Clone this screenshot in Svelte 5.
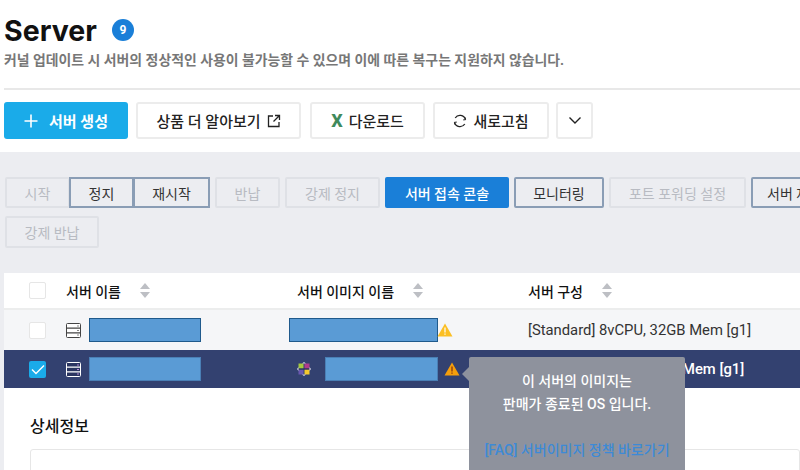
<script lang="ts">
    const actions = [
        { label: '시작', w: 65, kind: 'off' },
        { label: '정지', w: 65, kind: 'on', join: true },
        { label: '재시작', w: 77, kind: 'on', join: true },
        { label: '반납', w: 65, kind: 'off', gap: true },
        { label: '강제 정지', w: 95, kind: 'off', gap: true },
        { label: '서버 접속 콘솔', w: 124, kind: 'main', gap: true },
        { label: '모니터링', w: 90, kind: 'on', gap: true },
        { label: '포트 포워딩 설정', w: 137, kind: 'off', gap: true },
        { label: '서버 재설치', w: 100, kind: 'on', gap: true },
        { label: '강제 반납', w: 94, kind: 'off' }
    ];
</script>

<div class="page">
    <header>
        <div class="title-row">
            <h1>Server</h1>
            <span class="badge">9</span>
        </div>
        <p class="notice">커널 업데이트 시 서버의 정상적인 사용이 불가능할 수 있으며 이에 따른 복구는 지원하지 않습니다.</p>
        <div class="toolbar">
            <button class="create">
                <svg class="plus" width="14" height="14" viewBox="0 0 14 14" stroke="#fff" stroke-width="1.6">
                    <path d="M7 0.500v13M0.500 7h13" />
                </svg>
                서버 생성
            </button>
            <button class="tool learn">
                상품 더 알아보기
                <svg width="14" height="14" viewBox="0 0 14 14" fill="none" stroke="#222" stroke-width="1.3">
                    <path d="M6 2H1.500v10.500H12V8" />
                    <path d="M8 1.500h4.500V6M12.500 1.500L6.500 7.500" />
                </svg>
            </button>
            <button class="tool download"><span class="xls">X</span>다운로드</button>
            <button class="tool refresh">
                <svg width="14" height="14" viewBox="0 0 14 14" fill="none" stroke="#222" stroke-width="1.3">
                    <path d="M12.500 5.500A5.700 5.700 0 0 0 2.200 4" />
                    <path d="M1.500 8.500A5.700 5.700 0 0 0 11.800 10" />
                    <path d="M11.800 3.200l.8 2.500-2.400.2M2.200 10.800l-.8-2.500 2.400-.2" stroke-width="1" />
                </svg>
                새로고침
            </button>
            <button class="tool more" aria-label="더보기">
                <svg width="14" height="9" viewBox="0 0 14 9" fill="none" stroke="#222" stroke-width="1.4">
                    <path d="M1.500 1.500L7 7l5.500-5.500" />
                </svg>
            </button>
        </div>
    </header>

    <section class="content">
        <div class="actions">
            {#each actions as a}
                <button class="act {a.kind}" class:join={a.join} class:gap={a.gap} style="width:{a.w}px">{a.label}</button>
            {/each}
        </div>

        <div class="table">
            <div class="row head">
                <span class="check"><i class="box"></i></span>
                <span class="cell">서버 이름<i class="sort"></i></span>
                <span class="cell">서버 이미지 이름<i class="sort"></i></span>
                <span class="cell">서버 구성<i class="sort"></i></span>
            </div>
            <div class="row plain">
                <span class="check"><i class="box"></i></span>
                <span class="cell">
                    <svg class="srv" width="15" height="15" viewBox="0 0 15 15" fill="#fff" stroke="#444" stroke-width="1">
                        <rect x=".5" y=".5" width="14" height="14" rx="1" />
                        <path d="M1 5.200h13M1 9.800h13" stroke-width="1.200" />
                        <path d="M11 3h2M11 7.500h2M11 12h2" stroke="#888" />
                    </svg>
                    <i class="mask"></i>
                </span>
                <span class="cell img-cell">
                    <i class="mask wide"></i>
                    <svg class="warn" width="16" height="14" viewBox="0 0 16 14">
                        <path d="M8 .5L15.500 13.500H.5z" fill="#fbbf24" />
                        <path d="M7.400 4.500h1.200v5H7.400zM7.400 10.500h1.200v1.300H7.400z" fill="#fff" />
                    </svg>
                </span>
                <span class="cell config">[Standard] 8vCPU, 32GB Mem [g1]</span>
            </div>
            <div class="row selected">
                <span class="check">
                    <i class="box on">
                        <svg width="14" height="11" viewBox="0 0 14 11" fill="none" stroke="#fff" stroke-width="1.400"><path d="M1 5.500l4 4 8-8" /></svg>
                    </i>
                </span>
                <span class="cell">
                    <svg class="srv" width="15" height="15" viewBox="0 0 15 15" fill="#2a3560" stroke="#fff" stroke-width="1">
                        <rect x=".5" y=".5" width="14" height="14" rx="1" />
                        <path d="M1 5.200h13M1 9.800h13" stroke-width="1.200" />
                        <path d="M11 3h2M11 7.500h2M11 12h2" stroke="#b98ad8" />
                    </svg>
                    <i class="mask dim"></i>
                </span>
                <span class="cell img-cell">
                    <svg class="os" width="14" height="14" viewBox="0 0 14 14">
                        <path d="M1.500 1.500H6.500V6.500H1.500z" fill="#a5c93f" />
                        <path d="M7.500 1.500H12.500V6.500H7.500z" fill="#b03c8a" />
                        <path d="M7.500 7.500H12.500V12.500H7.500z" fill="#f5c92f" />
                        <path d="M1.500 7.500H6.500V12.500H1.500z" fill="#6a58b0" />
                        <path d="M7 0l2 1.500H5zM14 7l-1.500 2V5zM7 14l-2-1.500h4zM0 7l1.500-2v4z" fill="#d8d8e4" />
                        <path d="M2 7h10" stroke="#1b2450" stroke-width=".8" />
                    </svg>
                    <i class="mask dim short"></i>
                    <svg class="warn" width="16" height="14" viewBox="0 0 16 14">
                        <path d="M8 .5L15.500 13.500H.5z" fill="#f59e0b" />
                        <path d="M7.400 4.500h1.200v5H7.400zM7.400 10.500h1.200v1.300H7.400z" fill="#7c2d12" />
                    </svg>
                </span>
                <span class="cell config spec">[Standard] 8vCPU, 32GB Mem [g1]</span>
            </div>
            <div class="detail">
                <h2>상세정보</h2>
                <div class="detail-box"></div>
            </div>

            <div class="tip">
                <p>이 서버의 이미지는<br />판매가 종료된 OS 입니다.</p>
                <span class="faq">[FAQ] 서버이미지 정책 바로가기</span>
            </div>
        </div>
    </section>
</div>

<style>
    :global(body) {
        margin: 0;
    }

    .page {
        width: 800px;
        height: 470px;
        overflow: hidden;
        font-family: Roboto, "Noto Sans CJK KR", sans-serif;
        background: #ecedf1;
        color: #222;
    }

    header {
        background: #fff;
        height: 152px;
        box-sizing: border-box;
        padding: 13px 0 0 4px;
    }

    .title-row {
        display: flex;
        align-items: center;
        gap: 15px;
        height: 34px;
    }

    h1 {
        margin: 0;
        font-family: Inter, sans-serif;
        font-size: 28.5px;
        font-weight: 700;
        color: #111;
    }

    .badge {
        width: 22px;
        height: 22px;
        border-radius: 50%;
        background: #1a7fd8;
        color: #fff;
        font-size: 12px;
        font-weight: 700;
        display: flex;
        align-items: center;
        justify-content: center;
    }

    .notice {
        margin: 4px 0 0;
        font-size: 13.9px;
        font-weight: 700;
        line-height: 18px;
        color: #777;
        height: 21px;
    }

    .toolbar {
        margin-top: 16px;
        padding-top: 12px;
        border-top: 2px solid #e8e8e8;
        display: flex;
        gap: 8px;
    }

    button {
        font-family: inherit;
        box-sizing: border-box;
        margin: 0;
        padding: 0;
    }

    .create {
        width: 124px;
        height: 37px;
        border: 0;
        border-radius: 3px;
        background: #1aabe9;
        color: #fff;
        font-size: 15px;
        font-weight: 700;
        display: flex;
        align-items: center;
        justify-content: center;
    }

    .plus {
        margin-right: 11px;
    }

    .tool {
        height: 37px;
        background: #fff;
        border: 2px solid #ececec;
        border-radius: 3px;
        font-size: 15px;
        font-weight: 500;
        color: #222;
        display: flex;
        align-items: center;
        justify-content: center;
        gap: 6px;
    }

    .learn { width: 165px; }
    .download { width: 115px; margin-left: 1px; }
    .refresh { width: 116px; }
    .more { width: 37px; margin-left: -1px; }

    .xls {
        color: #3f8a5c;
        font-weight: 800;
        font-size: 18px;
    }

    .content {
        padding-top: 25px;
    }

    .actions {
        width: 880px;
        padding-left: 5px;
        display: flex;
        flex-wrap: wrap;
        row-gap: 8px;
    }

    .act {
        height: 31px;
        border-radius: 2px;
        font-size: 14px;
        background: #ecedf1;
    }

    .act.gap { margin-left: 5px; }
    .act.join { border-radius: 0; margin-left: -1px; }

    .off {
        border: 2px solid #dfe1e6;
        color: #b8bbc2;
    }

    .on {
        border: 2px solid #8a9db5;
        color: #333;
    }

    .act.main {
        border: 0;
        background: #1a7fd8;
        color: #fff;
        font-weight: 500;
    }

    .act:last-child {
        height: 32px;
    }

    .table {
        position: relative;
        margin: 25px 0 0 4px;
        background: #fff;
        height: 197px;
    }

    .row {
        display: grid;
        grid-template-columns: 62px 231px 231px 1fr;
        align-items: center;
        box-sizing: border-box;
        font-size: 14px;
    }

    .row.head {
        height: 37px;
        font-weight: 500;
        color: #111;
        border-bottom: 2px solid #eceded;
    }

    .row.plain {
        height: 40px;
        background: #f5f6f8;
        color: #333;
    }

    .row.selected {
        height: 38px;
        background: #334170;
        color: #fff;
    }

    .check {
        padding-left: 25px;
        display: flex;
    }

    .box {
        width: 17px;
        height: 17px;
        box-sizing: border-box;
        background: #fff;
        border: 1.5px solid #e6e6e6;
        border-radius: 2px;
    }

    .box.on {
        background: #1aabe9;
        border: 0;
        display: flex;
        align-items: center;
        justify-content: center;
    }

    .cell {
        display: flex;
        align-items: center;
        white-space: nowrap;
    }

    .config {
        font-size: 14.8px;
    }

    .sort {
        display: inline-block;
        width: 10px;
        height: 15px;
        margin-left: 19px;
        position: relative;
    }

    .sort::before,
    .sort::after {
        content: "";
        position: absolute;
        left: 0;
        border-left: 5px solid transparent;
        border-right: 5px solid transparent;
    }

    .sort::before {
        top: 0;
        border-bottom: 6px solid #bdbfc4;
    }

    .sort::after {
        bottom: 0;
        border-top: 6px solid #bdbfc4;
    }

    .srv {
        margin-right: 8px;
    }

    .mask {
        width: 112px;
        height: 24px;
        box-sizing: border-box;
        background: #5a9bd5;
        border: 1px solid #1f5a8c;
    }

    .mask.wide {
        width: 149px;
        margin-left: -8px;
    }

    .mask.dim {
        border-color: #4a7fb5;
    }

    .mask.short {
        width: 113px;
        margin-left: 14px;
    }

    .row.plain .warn {
        margin-left: -1px;
    }

    .row.selected .warn {
        margin-left: 6px;
    }

    .spec {
        font-weight: 500;
        margin-left: -9px;
    }

    .detail {
        padding: 25px 0 0 26px;
    }

    h2 {
        margin: 0;
        font-size: 16px;
        font-weight: 500;
        color: #111;
    }

    .detail-box {
        margin-top: 12px;
        height: 60px;
        background: #fff;
        border: 1px solid #e6e6e6;
        border-radius: 3px;
    }

    .tip {
        position: absolute;
        left: 465px;
        top: 84px;
        width: 216px;
        height: 140px;
        background: #8e929d;
        border-radius: 2px;
        text-align: center;
        color: #fff;
        font-size: 14px;
    }

    .tip::before {
        content: "";
        position: absolute;
        left: -7px;
        top: 10px;
        border-top: 7px solid transparent;
        border-bottom: 7px solid transparent;
        border-right: 7px solid #8e929d;
    }

    .tip p {
        margin: 13px 0 0;
        line-height: 23px;
        font-weight: 500;
    }

    .faq {
        display: block;
        margin-top: 23px;
        color: #3d8ad6;
        font-weight: 500;
    }
</style>
